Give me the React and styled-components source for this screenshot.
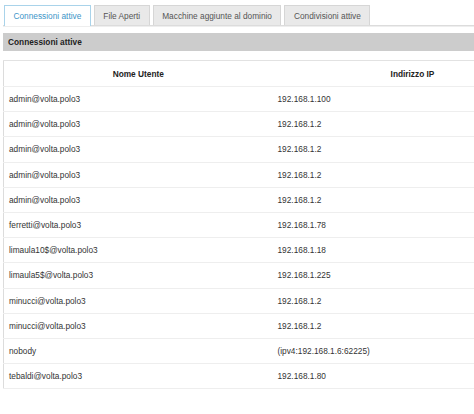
import React, { useState } from 'react'
import styled, { createGlobalStyle } from 'styled-components'

const GlobalStyle = createGlobalStyle`
    html, body {
        margin: 0;
        padding: 0;
        background: #fff;
        overflow: hidden;
    }
    body {
        font-family: "Liberation Sans", Arial, sans-serif;
        font-size: 8.3px;
        color: #333;
    }
`

const tabs = [
    'Connessioni attive',
    'File Aperti',
    'Macchine aggiunte al dominio',
    'Condivisioni attive',
]

const connections = [
    { user: 'admin@volta.polo3', ip: '192.168.1.100' },
    { user: 'admin@volta.polo3', ip: '192.168.1.2' },
    { user: 'admin@volta.polo3', ip: '192.168.1.2' },
    { user: 'admin@volta.polo3', ip: '192.168.1.2' },
    { user: 'admin@volta.polo3', ip: '192.168.1.2' },
    { user: 'ferretti@volta.polo3', ip: '192.168.1.78' },
    { user: 'limaula10$@volta.polo3', ip: '192.168.1.18' },
    { user: 'limaula5$@volta.polo3', ip: '192.168.1.225' },
    { user: 'minucci@volta.polo3', ip: '192.168.1.2' },
    { user: 'minucci@volta.polo3', ip: '192.168.1.2' },
    { user: 'nobody', ip: '(ipv4:192.168.1.6:62225)' },
    { user: 'tebaldi@volta.polo3', ip: '192.168.1.80' },
]

export default function App() {
    const [activeTab, setActiveTab] = useState(0)

    return (
        <>
        <GlobalStyle />
        <Page>
            <TabList>
                {tabs.map((t, i) => (
                    <Tab key={t} active={i === activeTab} onClick={() => setActiveTab(i)}>
                        {t}
                    </Tab>
                ))}
            </TabList>
            <SectionHeader>Connessioni attive</SectionHeader>
            <Table>
                <colgroup>
                    <col style={{ width: 269 }} />
                    <col style={{ width: 280 }} />
                </colgroup>
                <thead>
                    <tr>
                        <Th>Nome Utente</Th>
                        <Th>Indirizzo IP</Th>
                    </tr>
                </thead>
                <tbody>
                    {connections.map((c, i) => (
                        <tr key={i}>
                            <Td>{c.user}</Td>
                            <Td>{c.ip}</Td>
                        </tr>
                    ))}
                </tbody>
            </Table>
        </Page>
        </>
    )
}

const Page = styled.div`
    width: 560px;
    padding: 5px 0 0 3px;
`

const TabList = styled.div`
    display: flex;
    gap: 3px;
    padding-left: 1px;
    border-bottom: 1px solid #dcdcdc;
    box-shadow: 0 1px 0 #eee;
`

const Tab = styled.div`
    line-height: 20px;
    padding: 0 8.5px;
    box-sizing: border-box;
    border: 1px solid ${p => (p.active ? '#a9d3ea' : '#d6d6d6')};
    border-bottom: none;
    margin-bottom: ${p => (p.active ? '-1px' : '0')};
    height: ${p => (p.active ? '21px' : '20px')};
    background: ${p => (p.active ? '#fff' : '#e9e9e9')};
    color: ${p => (p.active ? '#3d95c8' : '#555')};
    cursor: pointer;
    white-space: nowrap;
`

const SectionHeader = styled.div`
    margin-top: 7px;
    height: 18px;
    line-height: 18px;
    padding-left: 5px;
    background: #cccccc;
    color: #222;
    font-weight: bold;
`

const Table = styled.table`
    margin-top: 9px;
    width: 549px;
    table-layout: fixed;
    border-collapse: collapse;
    border-left: 1px solid #dcdcdc;
    border-top: 1px solid #e2e2e2;
`

const Th = styled.th`
    height: 25px;
    padding: 0 5px;
    text-align: center;
    font-weight: bold;
    color: #222;
    border-bottom: 1px solid #eee;
`

const Td = styled.td`
    height: 24.2px;
    padding: 0 5px;
    text-align: left;
    color: #333;
    border-bottom: 1px solid #eee;
    white-space: nowrap;
`
